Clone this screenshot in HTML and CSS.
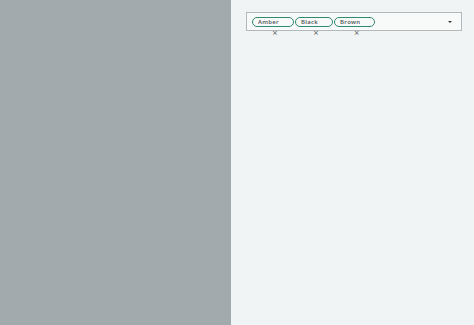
FILE: index.html
```html
<!DOCTYPE html>
<html lang="en">
  <head>
    <meta charset="UTF-8" />
    <title>Tag select</title>
    <link rel="stylesheet" href="styles.css">
  </head>
  <body>
    <div class="backdrop"></div>
    <div class="panel">
      <div class="select">
        <div class="tags">
          <div class="tag">
            <span class="pill">Amber</span>
            <button class="remove">×</button>
          </div>
          <div class="tag">
            <span class="pill">Black</span>
            <button class="remove">×</button>
          </div>
          <div class="tag">
            <span class="pill">Brown</span>
            <button class="remove">×</button>
          </div>
        </div>
        <span class="arrow"></span>
      </div>
    </div>
  </body>
</html>
```

FILE: styles.css
```css
body {
  margin: 0;
  display: flex;
  height: 100vh;
  font-family: "Open Sans", sans-serif;
  background: #f1f4f5;
}

.backdrop {
  width: 231px;
  background: #a3aaad;
}

.panel {
  flex: 1;
  padding: 12px 12px 0 15px;
}

.select {
  display: flex;
  align-items: flex-start;
  height: 17px;
  border: 1px solid #b3b9bb;
  background: #f8fafa;
  padding: 0 9px 0 5px;
}

.tags {
  flex: 1;
  display: flex;
  gap: 1px;
  padding-top: 3.5px;
}

.tag {
  display: flex;
  flex-direction: column;
  align-items: center;
}

.pill {
  height: 8.5px;
  line-height: 8.5px;
  padding: 0 14px 0 5px;
  border: 1.5px solid #2f8a70;
  border-radius: 8px;
  font-size: 6px;
  font-weight: 600;
  letter-spacing: 0.3px;
  color: #4c5153;
}

.remove {
  margin: 3px 0 0 4px;
  padding: 0;
  border: none;
  background: none;
  font-size: 7px;
  line-height: 7px;
  color: #4c5153;
  font-family: "DejaVu Sans", sans-serif;
}

.arrow {
  margin-top: 8px;
  width: 0;
  height: 0;
  border-left: 2px solid transparent;
  border-right: 2px solid transparent;
  border-top: 2px solid #333;
}
```
